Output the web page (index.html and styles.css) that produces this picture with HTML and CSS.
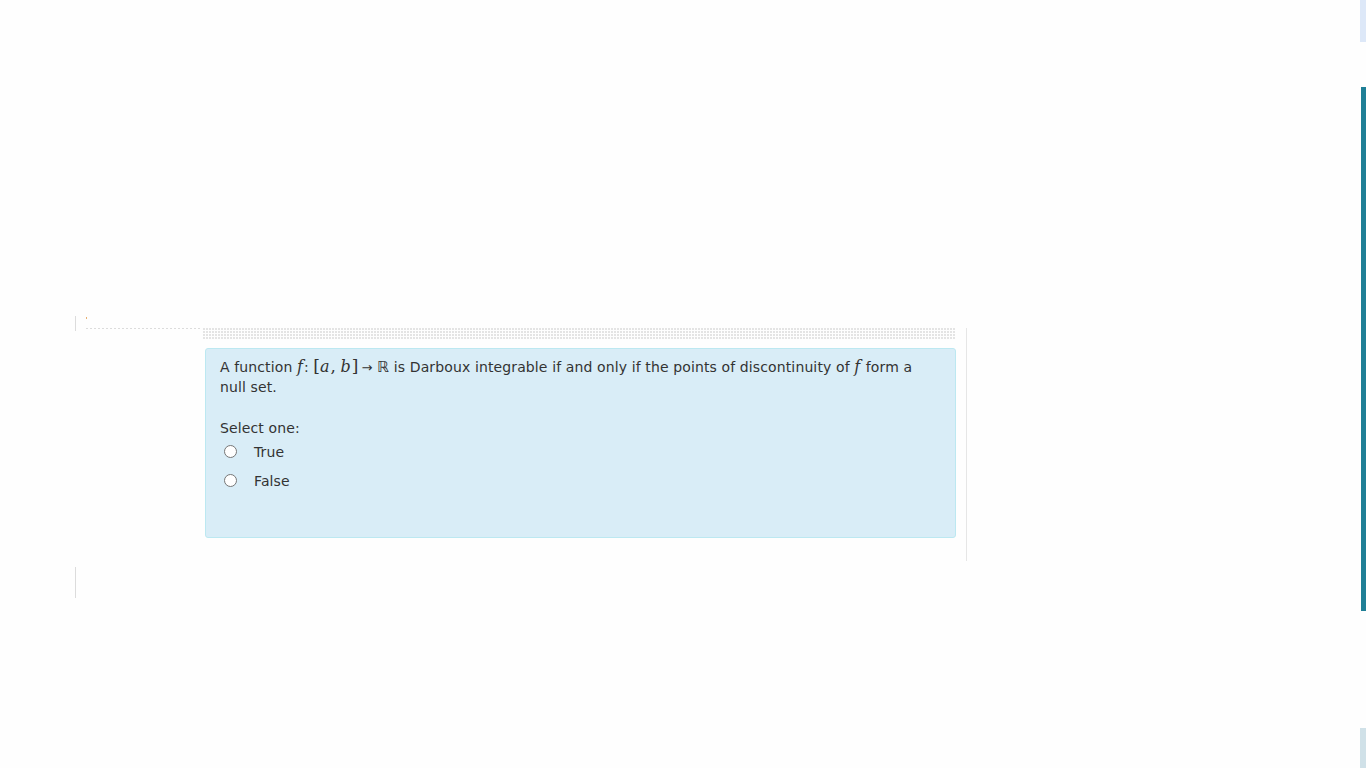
FILE: index.html
```html
<!DOCTYPE html>
<html>
<head>
<meta charset="utf-8">
<link rel="stylesheet" href="styles.css">
</head>
<body>
<div class="page">
  <div class="top-spacer"></div>
  <div class="que">
    <div class="info">
      <span class="tick"></span>
    </div>
    <div class="content">
      <div class="head-row">
        <div class="dash"></div>
        <div class="dots"></div>
      </div>
      <div class="content-inner">
        <div class="formulation">
          <p class="qtext">A function <span class="m">f</span>: <span class="mr">[</span><span class="m">a</span><span class="mr">,</span> <span class="m">b</span><span class="mr">]</span><span class="arr">→</span><span class="bb">ℝ</span> is Darboux integrable if and only if the points of discontinuity of <span class="m">f</span> form a<br>null set.</p>
          <div class="prompt">Select one:</div>
          <label class="opt"><span class="radio"></span>True</label>
          <label class="opt"><span class="radio"></span>False</label>
        </div>
      </div>
    </div>
  </div>
  <div class="after">
    <div class="vline2"></div>
  </div>
</div>
<div class="edge-top"></div>
<div class="edge-bar"></div>
<div class="edge-bottom"></div>
</body>
</html>
```
FILE: styles.css
```css
html, body {
  margin: 0;
  padding: 0;
  background: #fefefe;
  font-family: "DejaVu Sans", Verdana, sans-serif;
  color: #333;
}
.page {
  width: 1366px;
  height: 768px;
  overflow: hidden;
}
.top-spacer {
  height: 316px;
}
.que {
  display: flex;
  margin-left: 75px;
  height: 245px;
}
.info {
  width: 10px;
  height: 15px;
  border-left: 1px solid #dcdcdc;
  position: relative;
}
.tick {
  position: absolute;
  left: 10px;
  top: 1px;
  width: 1px;
  height: 2px;
  background: #e8b070;
}
.content {
  width: 880px;
  border-right: 1px solid #e6e6e6;
  margin-top: 12px;
}
.head-row {
  display: flex;
  height: 11px;
}
.dash {
  width: 116px;
  height: 1px;
  background-image: linear-gradient(to right, #dcdcdc 2px, transparent 2px);
  background-size: 4px 1px;
}
.dots {
  width: 753px;
  height: 11px;
  margin-left: 1px;
  background-image: linear-gradient(to right, #e4e4e4 2px, transparent 2px);
  background-size: 3px 3px;
  -webkit-mask-image: linear-gradient(to bottom, #000 2px, transparent 2px);
  -webkit-mask-size: 3px 3px;
  mask-image: linear-gradient(to bottom, #000 2px, transparent 2px);
  mask-size: 3px 3px;
}
.content-inner {
  padding: 9px 10px 0 119px;
}
.formulation {
  background: #d9edf7;
  border: 1px solid #bce8f1;
  border-radius: 3px;
  width: 700px;
  height: 167px;
  padding: 8px 35px 13px 14px;
  font-size: 14px;
  line-height: 20px;
  letter-spacing: 0.12px;
}
.qtext {
  margin: 0 0 21px 0;
}
.m {
  font-family: "DejaVu Serif", serif;
  font-style: italic;
  font-size: 16px;
  line-height: 1;
  letter-spacing: 0;
  padding-right: 1px;
}
.mr {
  font-family: "DejaVu Serif", serif;
  font-size: 17px;
  line-height: 1;
  letter-spacing: 0;
}
.arr {
  font-size: 13px;
  line-height: 1;
  margin: 0 5px 0 3px;
  letter-spacing: 0;
}
.bb {
  font-family: "DejaVu Sans", sans-serif;
  font-size: 15px;
  line-height: 1;
  letter-spacing: 0;
}
.prompt {
  margin-bottom: 1px;
}
.opt {
  display: flex;
  align-items: center;
  height: 25px;
  padding-left: 4px;
  margin-bottom: 4px;
}
.radio {
  width: 11px;
  height: 11px;
  border: 1px solid #767676;
  border-radius: 50%;
  background: #fff;
  margin-right: 17px;
}
.after {
  margin-left: 75px;
  padding-top: 6px;
}
.vline2 {
  width: 1px;
  height: 31px;
  background: #dcdcdc;
}
.edge-top {
  position: fixed;
  right: 0;
  top: 0;
  width: 6px;
  height: 42px;
  background: #dde8f8;
}
.edge-bar {
  position: fixed;
  right: 0;
  top: 87px;
  width: 5px;
  height: 524px;
  background: #1f7f96;
}
.edge-bottom {
  position: fixed;
  right: 0;
  top: 728px;
  width: 6px;
  height: 40px;
  background: #d0e1e8;
}
```
